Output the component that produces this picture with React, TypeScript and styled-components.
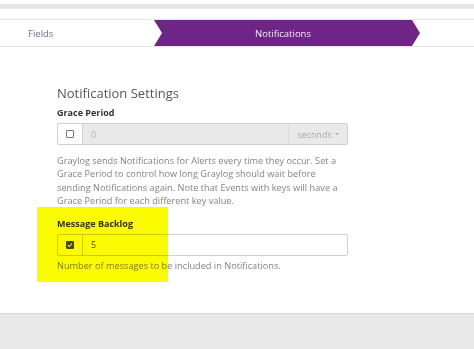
import styled, { createGlobalStyle } from "styled-components";

const GlobalStyle = createGlobalStyle`
    html, body {
        margin: 0;
        padding: 0;
        background: #ffffff;
        font-family: "Open Sans", "Liberation Sans", sans-serif;
    }
`;

const Page = styled.div`
    display: flex;
    flex-direction: column;
    height: 349px;
    overflow: hidden;
`;

const TopStrip = styled.div`
    margin-top: 4px;
    height: 5px;
    background-color: #e6e6e6;
    margin-bottom: 10px;
`;

const TabBar = styled.div`
    display: flex;
    height: 26px;
    border-top: 1px solid #e4e4e4;
    border-bottom: 1px solid #e4e4e4;
`;

const Tab = styled.div<{ $active?: boolean; $width: number }>`
    width: ${props => props.$width}px;
    display: flex;
    align-items: center;
    font-size: 9.5px;
    color: ${props => (props.$active ? "#f3ecf6" : "#7b6b86")};
    background-color: ${props => (props.$active ? "#6f2585" : "transparent")};
    justify-content: ${props => (props.$active ? "center" : "flex-start")};
    padding-left: ${props => (props.$active ? "0" : "28px")};
    padding-right: ${props => (props.$active ? "8px" : "0")};
    box-sizing: border-box;
    clip-path: ${props =>
        props.$active
            ? "polygon(0 0, calc(100% - 8px) 0, 100% 50%, calc(100% - 8px) 100%, 0 100%, 8px 50%)"
            : "none"};
`;

const Content = styled.div`
    flex: 1;
    padding-left: 57px;
    width: 291px;
    position: relative;
`;

const Heading = styled.h3`
    margin: 37px 0 0;
    font-size: 13px;
    line-height: 18px;
    font-weight: 400;
    color: #555555;
`;

const Label = styled.div<{ $gap: number }>`
    margin-top: ${props => props.$gap}px;
    font-size: 9px;
    line-height: 13px;
    font-weight: 700;
    color: #333333;
`;

const InputGroup = styled.div`
    margin-top: 4px;
    display: flex;
    height: 22px;
    box-sizing: border-box;
    border: 1px solid #cfcfcf;
    border-radius: 2px;
    background: #ffffff;
`;

const CheckAddon = styled.div`
    width: 24px;
    display: flex;
    align-items: center;
    justify-content: center;
    border-right: 1px solid #cfcfcf;
`;

const Box = styled.span<{ $checked?: boolean }>`
    width: 8px;
    height: 8px;
    box-sizing: border-box;
    border-radius: 1px;
    border: 1px solid ${props => (props.$checked ? "#4a4a4a" : "#777777")};
    background: ${props => (props.$checked ? "#4a4a4a" : "#ffffff")};
    display: flex;
    align-items: center;
    justify-content: center;
`;

const Field = styled.div<{ $disabled?: boolean }>`
    flex: 1;
    display: flex;
    align-items: center;
    padding-left: 8px;
    font-size: 9px;
    color: ${props => (props.$disabled ? "#b5b5b5" : "#555555")};
    background: ${props => (props.$disabled ? "#e9e9e9" : "#ffffff")};
`;

const UnitAddon = styled.div`
    width: 58px;
    display: flex;
    align-items: center;
    justify-content: center;
    gap: 3px;
    font-size: 9px;
    color: #a8a8a8;
    background: #e9e9e9;
    border-left: 1px solid #dcdcdc;
`;

const Caret = styled.span`
    width: 0;
    height: 0;
    border-left: 2.5px solid transparent;
    border-right: 2.5px solid transparent;
    border-top: 2.5px solid #a8a8a8;
`;

const Help = styled.p<{ $gap: number }>`
    margin: ${props => props.$gap}px 0 0;
    font-size: 9.2px;
    line-height: 13.4px;
    color: #838383;
`;

const Highlight = styled.div`
    position: absolute;
    left: 37px;
    top: 160px;
    width: 131px;
    height: 75px;
    background: #fafa00;
    mix-blend-mode: multiply;
    pointer-events: none;
`;

const Footer = styled.div`
    height: 35px;
    background-color: #e8e8e8;
    border-top: 1px solid #d9d9d9;
`;

function Check() {
    return (
        <svg width="6" height="6" viewBox="0 0 6 6">
            <path d="M1 3.1 L2.4 4.5 L5 1.5" fill="none" stroke="#ffffff" strokeWidth="1.1" />
        </svg>
    );
}

function App() {
    return (
        <Page>
            <GlobalStyle />
            <TopStrip />
            <TabBar>
                <Tab $width={154}>Fields</Tab>
                <Tab $width={266} $active>
                    Notifications
                </Tab>
            </TabBar>
            <Content>
                <Heading>Notification Settings</Heading>
                <Label $gap={4}>Grace Period</Label>
                <InputGroup>
                    <CheckAddon>
                        <Box />
                    </CheckAddon>
                    <Field $disabled>0</Field>
                    <UnitAddon>
                        seconds <Caret />
                    </UnitAddon>
                </InputGroup>
                <Help $gap={9}>
                    Graylog sends Notifications for Alerts every time they occur. Set a Grace Period to control
                    how long Graylog should wait before sending Notifications again. Note that Events with keys
                    will have a Grace Period for each different key value.
                </Help>
                <Label $gap={9}>Message Backlog</Label>
                <InputGroup>
                    <CheckAddon>
                        <Box $checked>
                            <Check />
                        </Box>
                    </CheckAddon>
                    <Field>5</Field>
                </InputGroup>
                <Help $gap={3}>Number of messages to be included in Notifications.</Help>
                <Highlight />
            </Content>
            <Footer />
        </Page>
    );
}

export default App;
